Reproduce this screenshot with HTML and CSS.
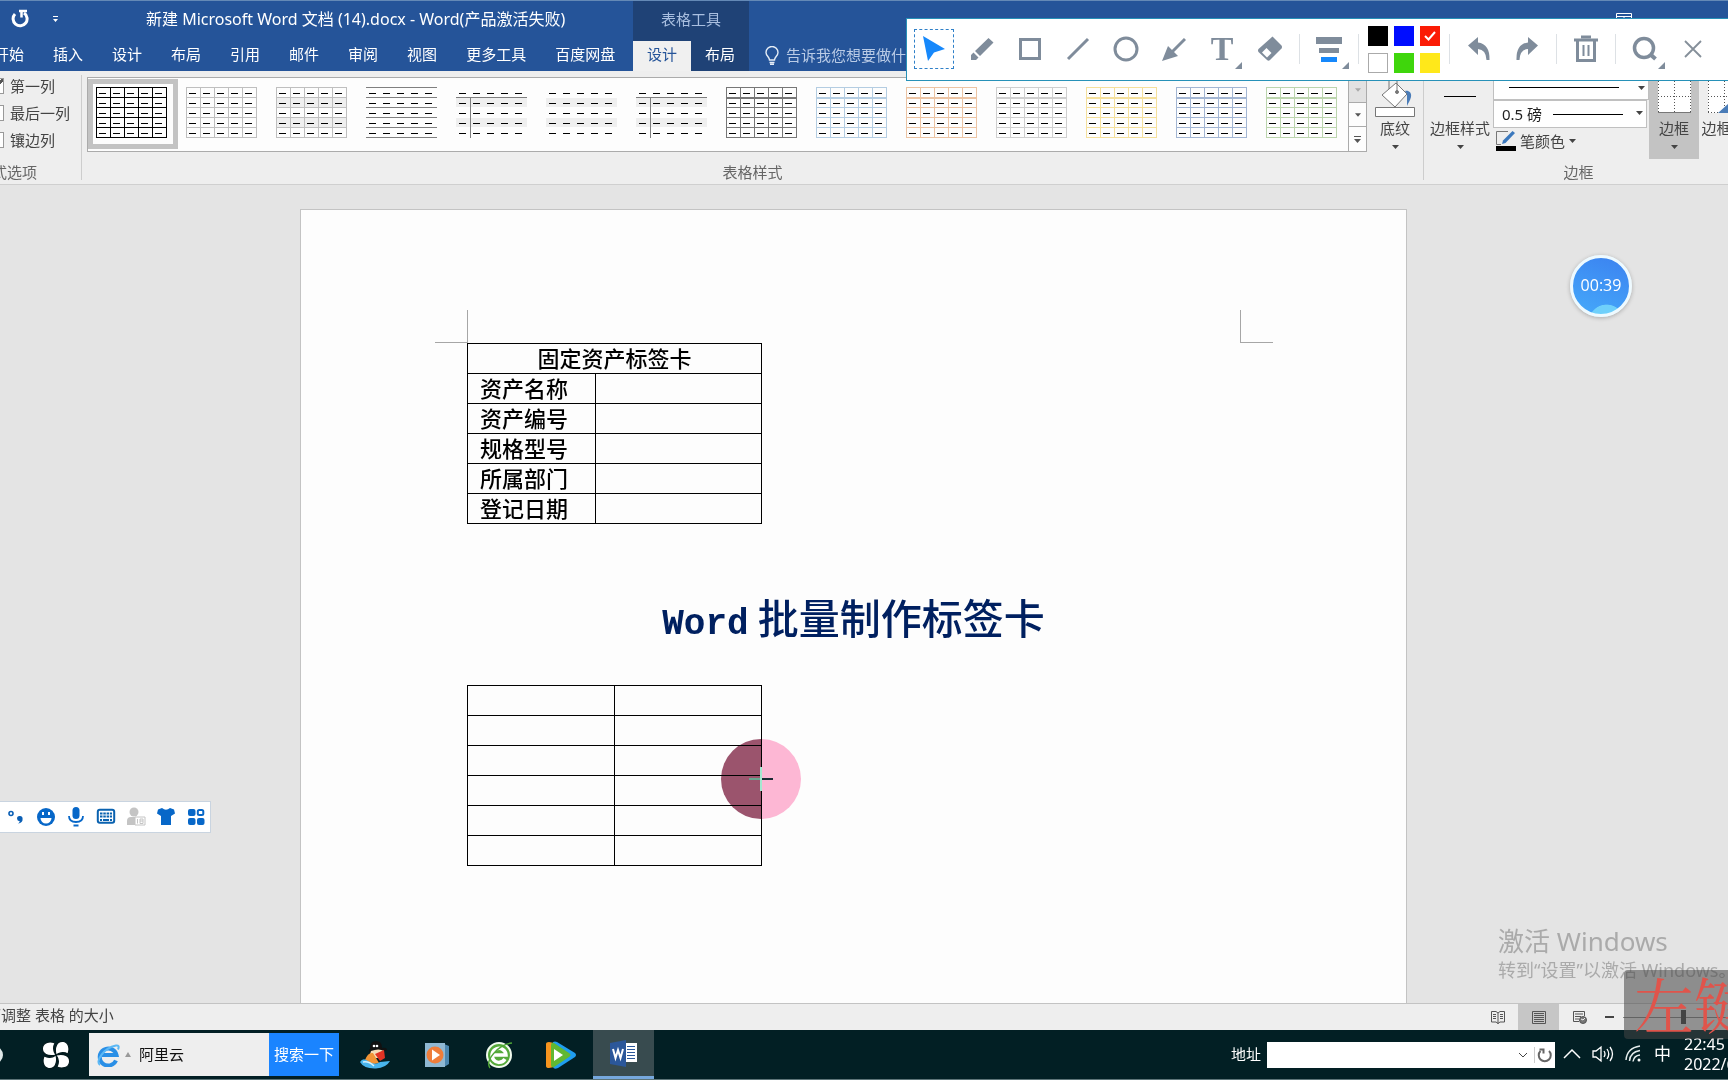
FILE: index.html
```
<!DOCTYPE html>
<html lang="zh-CN">
<head>
    <meta charset="UTF-8">
    <meta name="viewport" content="width=device-width, initial-scale=1.0">
    <title>新建 Microsoft Word 文档 (14).docx - Word</title>
    <link rel="stylesheet" href="styles.css">
</head>
<body>
    <!-- shared shapes -->
    <svg class="defs" aria-hidden="true">
        <symbol id="dashes" viewBox="0 0 71 51">
            <path d="M3 6.5h68M3 16.5h68M3 26.5h68M3 36.5h68M3 46.5h68" stroke="#000" stroke-dasharray="7 7"/>
        </symbol>
        <symbol id="grid" viewBox="0 0 71 51">
            <path d="M0 .5h71M0 10.5h71M0 20.5h71M0 30.5h71M0 40.5h71M0 50.5h71M.5 0v51M14.5 0v51M28.5 0v51M42.5 0v51M56.5 0v51M70.5 0v51" stroke="currentColor" fill="none"/>
            <use href="#dashes"/>
        </symbol>
        <symbol id="grid-head" viewBox="0 0 71 51">
            <use href="#grid"/>
            <path d="M0 11h71" stroke="currentColor" stroke-width="2"/>
        </symbol>
        <symbol id="bands" viewBox="0 0 71 51">
            <path d="M0 11h71v9H0zM0 31h71v9H0z" fill="#efefef"/>
        </symbol>
        <symbol id="arrow" viewBox="0 0 7 4">
            <path d="M0 0h7L3.500 4z" fill="currentColor"/>
        </symbol>
    </svg>

    <header>
        <div class="head-left">
            <div class="titlebar">
                <button class="quick" aria-label="重复">
                    <svg width="18" height="20" viewBox="0 0 18 20" fill="none" stroke="#fff" stroke-width="3"><path d="M4 5a7 7 0 1 0 9-1"/><path d="M8 2h8M10.500 1.500v7" stroke-width="2.500"/></svg>
                </button>
                <button class="quick" aria-label="自定义快速访问工具栏">
                    <svg width="7" height="7" viewBox="0 0 7 7" fill="#fff"><path d="M1 0h5v1H1zM1 3h5L3.500 6z"/></svg>
                </button>
                <span class="title">新建 Microsoft Word 文档 (14).docx - Word(产品激活失败)</span>
            </div>
            <nav class="tabs">
                <a href="#">开始</a>
                <a href="#">插入</a>
                <a href="#">设计</a>
                <a href="#">布局</a>
                <a href="#">引用</a>
                <a href="#">邮件</a>
                <a href="#">审阅</a>
                <a href="#">视图</a>
                <a href="#">更多工具</a>
                <a href="#">百度网盘</a>
            </nav>
        </div>
        <div class="context">
            <span class="context-title">表格工具</span>
            <nav class="context-tabs">
                <a href="#" class="current">设计</a>
                <a href="#">布局</a>
            </nav>
        </div>
        <div class="head-right">
            <svg width="14" height="19" viewBox="0 0 14 19" fill="none" stroke="#e4ecf6" stroke-width="1.400"><path d="M4.500 14c0-3-3.500-4-3.500-7.500a6 6 0 0 1 12 0C13 10 9.500 11 9.500 14zM4.500 16.500h5M5 18.300h4"/></svg>
            <span>告诉我您想要做什</span>
        </div>
        <svg class="ribbon-toggle" width="16" height="12" viewBox="0 0 16 12" fill="none" stroke="#fff"><path d="M.5.5h15v11H.5zM1 3.500h14M8 5v5M5.500 7L8 4.500 10.500 7"/></svg>
    </header>

    <section class="ribbon">
        <div class="group options">
            <div>
                <label><input type="checkbox" checked>第一列</label>
                <label><input type="checkbox">最后一列</label>
                <label><input type="checkbox">镶边列</label>
            </div>
            <p class="group-name">式选项</p>
        </div>

        <div class="group styles">
            <div class="group-body">
                <div class="gallery">
                    <button class="selected" aria-label="网格型"><svg class="thumb black"><use href="#grid"/></svg></button>
                    <button aria-label="网格型浅色"><svg class="thumb gray"><use href="#grid"/></svg></button>
                    <button aria-label="无格式表格 1"><svg class="thumb gray"><use href="#bands"/><use href="#grid"/></svg></button>
                    <button aria-label="无格式表格 2"><svg class="thumb"><path d="M0 .5h71M0 10.500h71M0 20.500h71M0 30.500h71M0 40.500h71M0 50.500h71" stroke="#7f7f7f"/><use href="#dashes"/></svg></button>
                    <button aria-label="无格式表格 3"><svg class="thumb"><use href="#bands"/><path d="M0 10.500h71M14.500 11v40" stroke="#7f7f7f"/><use href="#dashes"/></svg></button>
                    <button aria-label="无格式表格 4"><svg class="thumb"><use href="#bands"/><use href="#dashes"/></svg></button>
                    <button aria-label="无格式表格 5"><svg class="thumb"><use href="#bands"/><path d="M0 10.500h71M14.500 11v40" stroke="#7f7f7f"/><use href="#dashes"/></svg></button>
                    <button aria-label="网格表 1"><svg class="thumb dark"><use href="#grid-head"/></svg></button>
                    <button aria-label="网格表 1 着色 1"><svg class="thumb blue"><use href="#grid-head"/></svg></button>
                    <button aria-label="网格表 1 着色 2"><svg class="thumb orange"><use href="#grid-head"/></svg></button>
                    <button aria-label="网格表 1 着色 3"><svg class="thumb light"><use href="#grid-head"/></svg></button>
                    <button aria-label="网格表 1 着色 4"><svg class="thumb yellow"><use href="#grid-head"/></svg></button>
                    <button aria-label="网格表 1 着色 5"><svg class="thumb steel"><use href="#grid-head"/></svg></button>
                    <button aria-label="网格表 1 着色 6"><svg class="thumb green"><use href="#grid-head"/></svg></button>
                    <div class="scroll">
                        <button aria-label="向上" disabled><svg width="6" height="4"><use href="#arrow"/></svg></button>
                        <button aria-label="向下"><svg width="6" height="4"><use href="#arrow"/></svg></button>
                        <button aria-label="其他"><svg width="7" height="7" viewBox="0 0 7 7" fill="currentColor"><path d="M0 0h7v1H0zM0 3h7L3.500 7z"/></svg></button>
                    </div>
                </div>
                <button class="big">
                    <svg width="40" height="43" viewBox="0 0 40 43" fill="none" stroke="#777"><path d="M.5 32.500h39v9H.5z" fill="#fff"/><path d="M7 20L21 8l11 11-12 13z" fill="#fff"/><path d="M14 14V0M22 18V0"/><circle cx="22" cy="17" r="1.500" fill="#777"/><path d="M30 16c3-1 7 1 6 6-1 4-3 6-4 9V19z" fill="#4a7cb8" stroke="none"/></svg>
                    <span>底纹</span>
                    <svg class="drop" width="7" height="4"><use href="#arrow"/></svg>
                </button>
            </div>
            <p class="group-name">表格样式</p>
        </div>

        <div class="group borders">
            <div class="group-body">
                <button class="big wide">
                    <svg width="32" height="43" viewBox="0 0 32 43"><path d="M0 21.500h32" stroke="#000"/></svg>
                    <span>边框样式</span>
                    <svg class="drop" width="7" height="4"><use href="#arrow"/></svg>
                </button>
                <div class="pen">
                    <label class="pick">
                        <select aria-label="笔样式"><option></option></select>
                        <svg class="stroke long" viewBox="0 0 110 1" preserveAspectRatio="none"><path d="M0 .5h110" stroke="#000"/></svg>
                        <svg class="mark" width="7" height="4"><use href="#arrow"/></svg>
                    </label>
                    <label class="pick">
                        <select aria-label="笔划粗细"><option>0.5 磅</option></select>
                        <svg class="stroke" viewBox="0 0 70 1" preserveAspectRatio="none"><path d="M0 .5h70" stroke="#000"/></svg>
                        <svg class="mark" width="7" height="4"><use href="#arrow"/></svg>
                    </label>
                    <button class="pen-color">
                        <svg width="20" height="20" viewBox="0 0 20 20"><path d="M12 .5H.5v13H5" fill="none" stroke="#777"/><path d="M6 13l1-3.500L16.500 0 19 2 9.500 12z" fill="#3b78bd"/><path d="M0 15h20v5H0z"/></svg>
                        笔颜色
                        <svg width="7" height="4"><use href="#arrow"/></svg>
                    </button>
                </div>
                <button class="big active">
                    <svg width="33" height="43" viewBox="0 0 33 43" fill="none"><path d="M0 0h33v38H0z" fill="#fff"/><path d="M.5 0v37M16.500 0v37M32.500 0v37M0 21.500h33" stroke="#555" stroke-dasharray="1 2"/><path d="M0 37.500h33" stroke="#777"/></svg>
                    <span>边框</span>
                    <svg class="drop" width="7" height="4"><use href="#arrow"/></svg>
                </button>
                <button class="big brush">
                    <svg width="33" height="43" viewBox="0 0 33 43" fill="none"><path d="M0 0h33v38H0z" fill="#fff"/><path d="M.5 0v37M16.500 0v37M32.500 0v37M0 21.500h33M0 37.500h12" stroke="#555" stroke-dasharray="1 2"/><path d="M10 38L20 29l13-3v12z" fill="#4a7cb8"/></svg>
                    <span>边框刷</span>
                </button>
            </div>
            <p class="group-name">边框</p>
        </div>
    </section>

    <main>
        <div class="page">
            <i class="corner left"></i>
            <i class="corner right"></i>
            <table class="card">
                <tr><th colspan="2" class="card-title">固定资产标签卡</th></tr>
                <tr><th>资产名称</th><td></td></tr>
                <tr><th>资产编号</th><td></td></tr>
                <tr><th>规格型号</th><td></td></tr>
                <tr><th>所属部门</th><td></td></tr>
                <tr><th>登记日期</th><td></td></tr>
            </table>
            <h1><span>Word</span> 批量制作标签卡</h1>
            <div class="blank-wrap">
                <table class="blank">
                    <tr><td></td><td></td></tr>
                    <tr><td></td><td></td></tr>
                    <tr><td></td><td></td></tr>
                    <tr><td></td><td></td></tr>
                    <tr><td></td><td></td></tr>
                    <tr><td></td><td></td></tr>
                </table>
                <div class="click-spot"></div>
                <svg class="cross" width="24" height="24" viewBox="0 0 24 24"><path d="M0 12h12" stroke="#68a58f" stroke-width="2"/><path d="M12 12h12" stroke="#1b2a33" stroke-width="2"/><path d="M12 0v24" stroke="#a5e8d0" stroke-width="2"/></svg>
            </div>
        </div>
        <div class="timer">00:39</div>
        <div class="ime">
            <button aria-label="标点"><svg width="20" height="20" viewBox="0 0 20 20" fill="#0b5fb5"><circle cx="5" cy="6.500" r="2" fill="none" stroke="#0b5fb5" stroke-width="1.600"/><path d="M13.500 9a2.600 2.600 0 1 0 .3 5.200c-.2 1-.8 1.600-1.800 2.300 3.200-.2 4.800-2 4.600-4.800A2.800 2.800 0 0 0 13.500 9z"/></svg></button>
            <button aria-label="表情"><svg width="20" height="20" viewBox="0 0 20 20"><circle cx="10" cy="10" r="9" fill="#0767c8"/><path d="M7 5v3M13 5v3" stroke="#fff" stroke-width="2"/><path d="M4.500 11h11a5.500 5.500 0 0 1-11 0z" fill="#fff"/></svg></button>
            <button aria-label="语音"><svg width="20" height="20" viewBox="0 0 20 20" fill="none" stroke="#0767c8"><rect x="6.500" y="0" width="7" height="12" rx="3.500" fill="#0767c8" stroke="none"/><path d="M3 9c0 4 3 6 7 6s7-2 7-6" stroke-width="1.800"/><path d="M7.500 18.500h5" stroke-width="2"/></svg></button>
            <button aria-label="键盘"><svg width="20" height="20" viewBox="0 0 20 20"><rect x="1.800" y="2.800" width="16.400" height="13" rx="2" fill="#fff" stroke="#0a62b0" stroke-width="2"/><path d="M4 6.500h12M4 9.500h12" stroke="#0a62b0" stroke-width="2" stroke-dasharray="2.500 .8"/><path d="M4 13h2M7 13h6M14 13h2" stroke="#0a62b0" stroke-width="2"/></svg></button>
            <button aria-label="用户"><svg width="20" height="20" viewBox="0 0 20 20"><circle cx="8" cy="5" r="4.500" fill="#c4c4c4"/><path d="M1 18v-4q0-4 4-4h6q3 0 4 4v4z" fill="#c4c4c4"/><path d="M9 10h10v8H9z" fill="#fff" stroke="#c4c4c4"/><path d="M11.500 12v4.500M14 12h3v4.500h-3zM14 14h3" stroke="#c4c4c4" fill="none"/></svg></button>
            <button aria-label="皮肤"><svg width="20" height="20" viewBox="0 0 20 20"><path d="M6 1q4 3.500 8 0l4 1.500 1 4-4 2.500v9H5V9L1 6.500l1-4z" fill="#0767c8"/></svg></button>
            <button aria-label="工具"><svg width="20" height="20" viewBox="0 0 20 20" fill="#0767c8"><rect x="2" y="2" width="7.500" height="7" rx="2"/><rect x="11.800" y="3" width="5.500" height="5" rx="1.500" fill="#fff" stroke="#0767c8" stroke-width="2"/><rect x="2" y="11" width="7.500" height="7" rx="2"/><rect x="11" y="11" width="7.500" height="7" rx="2"/></svg></button>
        </div>
        <div class="watermark">
            <p class="big-line">激活 Windows</p>
            <p>转到“设置”以激活 Windows。</p>
        </div>
    </main>

    <footer class="status">
        <span class="hint">可调整 表格 的大小</span>
        <button aria-label="阅读视图"><svg width="14" height="13" viewBox="0 0 14 13" fill="none" stroke="#555"><path d="M7 2L5 .5H.5v10.500H5l2 1.500 2-1.500h4.500V.5H9zM7 2v11M2 3.500h3M2 5.500h3M2 7.500h3M9 3.500h3M9 5.500h3M9 7.500h3"/></svg></button>
        <button class="on" aria-label="页面视图"><svg width="14" height="13" viewBox="0 0 14 13" fill="none" stroke="#555"><path d="M.5.5h13v12H.5zM2 2.500h10M2 4.500h10M2 6.500h10M2 8.500h10M2 10.500h10"/></svg></button>
        <button aria-label="Web 版式"><svg width="14" height="13" viewBox="0 0 14 13" fill="none" stroke="#555"><path d="M6 10.500H.5V.5h11V5M2 3h8M2 5.500h6M2 8h4"/><circle cx="10" cy="9" r="3.500" fill="#777"/><path d="M8 8l2 1 2-2" stroke="#eee"/></svg></button>
        <div class="zoom">
            <button aria-label="缩小"></button>
            <input type="range" min="0" max="100" value="50" aria-label="缩放">
        </div>
    </footer>

    <footer class="taskbar">
        <div class="task-left">
            <svg class="cortana" width="20" height="20" viewBox="0 0 20 20"><circle cx="10" cy="10" r="7.500" fill="none" stroke="#dfe8e8" stroke-width="3"/></svg>
            <svg class="pinwheel" width="28" height="28" viewBox="0 0 28 28"><g fill="#fff" stroke="#04191c" stroke-width="1.200"><path id="petal" d="M14 14C6 16-.5 13 .5 6.500 1.500 1 8 0 13 2 11 6 11 10 14 14z"/><use href="#petal" transform="rotate(90 14 14)"/><use href="#petal" transform="rotate(180 14 14)"/><use href="#petal" transform="rotate(270 14 14)"/></g></svg>
            <form class="search">
                <svg width="24" height="24" viewBox="0 0 24 24" fill="none"><path d="M20 17.500A8.500 8.500 0 1 1 20.500 12H6" stroke="#2a8fe6" stroke-width="4"/><path d="M4 22C-1 19 7 5 20 2.500q4-.5 2 4" stroke="#5bb8f5" stroke-width="2"/></svg>
                <svg width="6" height="5" viewBox="0 0 6 5"><path d="M0 5h6L3 0z" fill="#999"/></svg>
                <input type="text" value="阿里云" aria-label="搜索">
                <button type="button">搜索一下</button>
            </form>
            <button class="app" aria-label="QQ">
                <svg width="32" height="30" viewBox="0 0 32 30"><path d="M11 9q0-8 6-8t6 7q5-1 5 2-3 2-7 1l-7 1q-4 2-4-1 0-2 1-2z" fill="#111"/><circle cx="15" cy="6" r="1.300" fill="#fff"/><circle cx="18" cy="6" r="1.300" fill="#fff"/><path d="M12 11q8-3 13 0v7H10z" fill="#f5dcb6"/><path d="M16 14l9-4 1 8-5 3z" fill="#e23324"/><path d="M6 20q3-8 8-7l6 10-10 2z" fill="#f19436"/><path d="M1 22q3-5 8-1 7 5 12 1l10-1q-4 7-14 7.500Q5 29 1 22z" fill="#48b4ec"/><path d="M4 22q6-1 11 4" stroke="#d4f1ff" stroke-width="1.500" fill="none"/></svg>
            </button>
            <button class="app" aria-label="播放器">
                <svg width="26" height="26" viewBox="0 0 26 26"><path d="M20 2l5 2v18l-5 3z" fill="#4c87b0"/><path d="M1 1h20v24H1z" fill="#8fb8d2"/><circle cx="11" cy="13" r="8.500" fill="#ef7d3a"/><path d="M8 7.500v11l8-5.500z" fill="#fff"/></svg>
            </button>
            <button class="app" aria-label="浏览器">
                <svg width="28" height="28" viewBox="0 0 28 28"><circle cx="14" cy="14" r="12" fill="#55a93a" stroke="#f1faee" stroke-width="2"/><path d="M20 18a7 7 0 1 1 1-4H8" stroke="#fff" stroke-width="3.500" fill="none"/><path d="M5 27C0 20 12 4 27 2" stroke="#4fa636" stroke-width="1.500" fill="none"/></svg>
            </button>
            <button class="app" aria-label="视频">
                <svg width="32" height="28" viewBox="0 0 32 28"><path d="M8 1q2-1 4 0l18 11q2 2 0 4L13 27q-4 2-5-1z" fill="#1f9df0"/><path d="M1 3q0-2 3-2l5 1v24l-5 1q-3 0-3-2z" fill="#f7941e"/><path d="M6 4q0-3 3-2l15 10q3 2 0 4L9 26q-3 1-3-2z" fill="#61b832"/><path d="M9 8v12l9-6z" fill="#fff"/></svg>
            </button>
            <button class="app running" aria-label="Word">
                <svg width="27" height="27" viewBox="0 0 27 27"><path d="M15 3h12v19H15z" fill="#fff"/><path d="M17 6.500h8M17 9.500h8M17 12.500h8M17 15.500h8M17 18.500h8" stroke="#2b579a"/><path d="M0 3l16-3v27L0 24z" fill="#2b579a"/><path d="M3 9l2.500 9L8 10l2.500 8L13 9" stroke="#fff" stroke-width="2" fill="none"/></svg>
            </button>
        </div>
        <div class="tray">
            <label for="addr">地址</label>
            <div class="address">
                <input type="text" id="addr">
                <svg width="10" height="6" viewBox="0 0 10 6"><path d="M1 1l4 4 4-4" fill="none" stroke="#444"/></svg>
                <button aria-label="刷新"><svg width="16" height="16" viewBox="0 0 16 16" fill="none" stroke="#666" stroke-width="2"><path d="M3.500 4A6 6 0 1 0 12 4M2.500 2.500h4v4"/></svg></button>
            </div>
            <svg width="18" height="18" viewBox="0 0 18 18"><path d="M1 13l8-8 8 8" fill="none" stroke="#fff" stroke-width="1.500"/></svg>
            <svg width="22" height="18" viewBox="0 0 22 18" fill="none" stroke="#fff" stroke-width="1.300"><path d="M1 6h3l5-4v14l-5-4H1zM12 6q2 3 0 6M15 4q3.500 5 0 10M18 2q5 7 0 14"/></svg>
            <svg width="18" height="18" viewBox="0 0 18 18" fill="none" stroke="#e4ecec" stroke-width="1.500"><path d="M1 15Q2 3 15 1M4.500 16Q5 7 15 5.500M8 16.500Q9 10.500 15 10"/><circle cx="14" cy="15" r="1.500" fill="#fff" stroke="none"/></svg>
            <span class="lang">中</span>
            <div class="clock">22:45<br>2022/6/11</div>
        </div>
    </footer>

    <div class="key-hint">左键</div>

    <div class="paint">
        <button class="chosen" aria-label="选择"><svg width="24" height="26" viewBox="0 0 24 26"><path d="M1 0l22 13-11 3.500L6 25z" fill="#1688fb"/></svg></button>
        <button aria-label="画笔"><svg width="24" height="24" viewBox="0 0 24 24" fill="#7f8c9b"><path d="M18.500 1l5 4.500L10 19l-5-5zM3.500 15.500l5 5L6 23H1v-5z"/></svg></button>
        <button aria-label="矩形"><svg width="24" height="24" viewBox="0 0 24 24"><path d="M2.500 2.500h19v19h-19z" fill="none" stroke="#7f8c9b" stroke-width="3"/></svg></button>
        <button aria-label="直线"><svg width="24" height="24" viewBox="0 0 24 24"><path d="M2 22L22 2" stroke="#7f8c9b" stroke-width="3"/></svg></button>
        <button aria-label="椭圆"><svg width="26" height="26" viewBox="0 0 26 26"><circle cx="13" cy="13" r="11" fill="none" stroke="#7f8c9b" stroke-width="3"/></svg></button>
        <button aria-label="箭头"><svg width="24" height="24" viewBox="0 0 24 24"><path d="M23 2L10 15" stroke="#7f8c9b" stroke-width="3"/><path d="M0 24L6 9l10 10z" fill="#7f8c9b"/></svg></button>
        <button class="letter more" aria-label="文字">T</button>
        <button aria-label="橡皮擦"><svg width="26" height="26" viewBox="0 0 26 26"><path d="M15.500 0.500l9 9q1 1.500 0 3L13 24q-1.500 1.300-3 0l-8.500-8q-1-1.500 0-3z" fill="#7f8c9b"/><path d="M9.500 12l5 5-4.500 4.500-5-5z" fill="#fff"/></svg></button>
        <i class="sep"></i>
        <button class="more" aria-label="线宽"><svg width="26" height="26" viewBox="0 0 26 26"><path d="M0 1h26v7H0zM3 12h20v5H3z" fill="#7f8c9b"/><path d="M5 21h16v5H5z" fill="#1688fb"/></svg></button>
        <i class="sep"></i>
        <div class="colors">
            <button class="c-black" aria-label="黑"></button>
            <button class="c-blue" aria-label="蓝"></button>
            <button class="c-red" aria-label="红"><svg width="12" height="10" viewBox="0 0 12 10"><path d="M1 5l3.500 3.500L11 1" fill="none" stroke="#fff" stroke-width="2"/></svg></button>
            <button class="c-white" aria-label="白"></button>
            <button class="c-green" aria-label="绿"></button>
            <button class="c-yellow" aria-label="黄"></button>
        </div>
        <i class="sep"></i>
        <button aria-label="撤销"><svg width="22" height="24" viewBox="0 0 22 24"><path d="M0 8.500L10 0v5.500Q22 7 21.500 23h-3Q18 12.500 10 12v6z" fill="#7f8c9b"/></svg></button>
        <button aria-label="重做"><svg width="22" height="24" viewBox="0 0 22 24"><path d="M22 8.500L12 0v5.500Q0 7 .5 23h3Q4 12.500 12 12v6z" fill="#7f8c9b"/></svg></button>
        <i class="sep"></i>
        <button aria-label="删除"><svg width="24" height="28" viewBox="0 0 24 28" fill="none" stroke="#7f8c9b"><path d="M0 5h24" stroke-width="3"/><path d="M7 2h10" stroke-width="3"/><path d="M3.500 6v19.500h17V6" stroke-width="3"/><path d="M9.500 10v11M14.500 10v11" stroke-width="2"/></svg></button>
        <i class="sep"></i>
        <button class="more" aria-label="放大"><svg width="26" height="26" viewBox="0 0 26 26"><circle cx="12" cy="12" r="9.500" fill="none" stroke="#7f8c9b" stroke-width="3.500"/><path d="M18 18l5.500 5" stroke="#7f8c9b" stroke-width="4"/></svg></button>
        <button aria-label="关闭"><svg width="18" height="18" viewBox="0 0 18 18"><path d="M1 1l16 16M17 1L1 17" stroke="#858f99" stroke-width="1.800"/></svg></button>
    </div>
</body>
</html>
```
FILE: styles.css
```
* {
    box-sizing: border-box;
}

body {
    position: relative;
    display: flex;
    flex-direction: column;
    height: 100vh;
    margin: 0;
    overflow: hidden;
    font-family: "Noto Sans", "Noto Sans CJK SC", sans-serif;
    font-size: 15px;
    line-height: 20px;
    color: #444;
    background-color: #e4e4e4;
}

button {
    padding: 0;
    border: none;
    background: none;
    font: inherit;
    color: inherit;
    flex-shrink: 0;
}

a {
    color: inherit;
    text-decoration: none;
}

p {
    margin: 0;
}

svg {
    display: block;
    flex-shrink: 0;
}

.defs {
    position: absolute;
    width: 0;
    height: 0;
}

/* title bar and tabs */
header {
    position: relative;
    display: flex;
    height: 71px;
    flex-shrink: 0;
    background-color: #255499;
    border-top: 1px solid #6489b6;
    color: #fff;
    white-space: nowrap;
}

.head-left {
    width: 633px;
}

.titlebar {
    display: flex;
    align-items: center;
    height: 40px;
    padding: 0 0 4px 11px;
}

.quick {
    display: flex;
    width: 18px;
    margin-right: 23px;
}

.title {
    margin-left: 53px;
    font-size: 16px;
}

.tabs {
    display: flex;
    gap: 29px;
    margin-left: -6px;
    line-height: 26px;
}

.context {
    width: 116px;
    background-color: #1f4276;
}

.context-title {
    display: block;
    height: 40px;
    line-height: 36px;
    text-align: center;
    color: #a9bfe0;
}

.context-tabs {
    display: flex;
    line-height: 26px;
}

.context-tabs a {
    flex: 1;
    height: 30px;
    text-align: center;
}

.context-tabs .current {
    background-color: #f0f0f0;
    color: #255499;
}

.head-right {
    display: flex;
    align-items: center;
    gap: 7px;
    margin: 38px 0 0 16px;
    color: #b9cbe6;
}

.ribbon-toggle {
    position: absolute;
    right: 96px;
    top: 12px;
}

/* ribbon */
.ribbon {
    display: flex;
    height: 114px;
    flex-shrink: 0;
    padding: 4px 0;
    background-color: #eee;
    border-bottom: 1px solid #cfcfcf;
    white-space: nowrap;
    overflow: hidden;
}

.group {
    display: flex;
    flex-direction: column;
    justify-content: space-between;
    flex-shrink: 0;
    border-right: 1px solid #cdcdcd;
}

.group-body {
    display: flex;
}

.group-name {
    line-height: 16px;
    text-align: center;
    color: #666;
}

.options {
    width: 82px;
}

.options label {
    display: flex;
    align-items: center;
    gap: 6px;
    height: 27px;
    margin-left: -12px;
}

.options > div {
    margin-top: -3px;
}

.options input {
    appearance: none;
    width: 16px;
    height: 16px;
    margin: 0;
    flex-shrink: 0;
    border: 1px solid #999;
    background-color: #fff;
}

.options input:checked {
    background-image: linear-gradient(135deg, transparent 45%, #555 45%, #555 58%, transparent 58%);
}

.options .group-name {
    align-self: flex-end;
    margin-right: 44px;
}

.styles {
    width: 1342px;
}

.gallery {
    display: flex;
    height: 75px;
    margin: 2px 5px 0;
    border: 1px solid #ababab;
    background-color: #fdfdfd;
}

.gallery > button {
    display: flex;
    align-items: flex-start;
    width: 90px;
    height: 70px;
    margin-top: 1px;
    padding: 8px 0 0 8px;
}

.gallery > .selected {
    padding: 3px 0 0 3px;
    border: 5px solid #c3c3c3;
}

.thumb {
    width: 71px;
    height: 51px;
}

.thumb use {
    width: 71px;
    height: 51px;
}

.black { color: #000; }
.gray { color: #bfbfbf; }
.dark { color: #777; }
.blue { color: #b4cde2; }
.orange { color: #ecc4a4; }
.light { color: #cfcfcf; }
.yellow { color: #f5e09c; }
.steel { color: #a3b6d3; }
.green { color: #bcd5ae; }

.scroll {
    display: flex;
    flex-direction: column;
    width: 18px;
    border-left: 1px solid #ababab;
}

.scroll button {
    display: flex;
    align-items: center;
    justify-content: center;
    flex: 1;
    border-top: 1px solid #ababab;
    color: #555;
}

.scroll button:disabled {
    border-top: none;
    background-color: #e2e2e2;
    color: #aaa;
}

.big {
    display: flex;
    flex-direction: column;
    align-items: center;
    width: 46px;
    height: 84px;
    color: #444;
}

.big .drop {
    margin-top: 7px;
}

.wide {
    width: 62px;
    margin: 0 2px 0 5px;
}

.active {
    width: 50px;
    background-color: #c3c3c3;
}

.brush {
    width: 48px;
    margin-left: 1px;
}

.borders {
    width: 310px;
}

.pen {
    width: 156px;
    flex-shrink: 0;
}

.pick {
    position: relative;
    display: block;
    height: 25px;
}

.pick + .pick {
    height: 28px;
    margin-right: 2px;
}

.pick select {
    appearance: none;
    width: 100%;
    height: 100%;
    padding: 0 8px;
    border: 1px solid #c0c0c0;
    border-radius: 0;
    background-color: #fff;
    font: inherit;
    color: #222;
}

.stroke {
    position: absolute;
    right: 24px;
    top: 14px;
    width: 70px;
    height: 1px;
}

.long {
    right: 30px;
    top: 12px;
    width: 110px;
}

.mark {
    position: absolute;
    right: 4px;
    top: 11px;
}

.pen-color {
    display: flex;
    align-items: center;
    gap: 4px;
    height: 26px;
    margin-left: 3px;
}

/* document */
main {
    position: relative;
    display: flex;
    justify-content: center;
    flex: 1;
    min-height: 0;
    padding: 24px 21px 0 0;
    overflow: hidden;
}

.page {
    position: relative;
    width: 1107px;
    height: 1560px;
    flex-shrink: 0;
    padding: 133px 166px;
    border: 1px solid #c3c3c3;
    background-color: #fdfdfd;
}

.corner {
    position: absolute;
    top: 100px;
    width: 33px;
    height: 33px;
    border-bottom: 1px solid #a6a6a6;
}

.corner.left {
    left: 134px;
    border-right: 1px solid #a6a6a6;
}

.corner.right {
    right: 133px;
    border-left: 1px solid #a6a6a6;
}

table {
    width: 295px;
    border-collapse: collapse;
    table-layout: fixed;
}

tr {
    height: 30px;
}

th, td {
    padding: 0;
    border: 1px solid #000;
}

.card {
    table-layout: auto;
    color: #000;
    font-family: "Noto Sans CJK SC", sans-serif;
    font-size: 22px;
    line-height: 26px;
}

.card th {
    width: 128px;
    padding: 0 0 3px 12px;
    font-weight: 500;
    text-align: left;
}

.card .card-title {
    width: auto;
    padding-left: 0;
    text-align: center;
}

h1 {
    height: 60px;
    margin: 62px 0 39px;
    color: #002060;
    font-family: "Noto Sans CJK SC", sans-serif;
    font-size: 41px;
    font-weight: 500;
    line-height: 60px;
    text-align: center;
}

h1 span {
    font-family: "Liberation Mono", monospace;
    font-size: 36px;
    font-weight: bold;
}

.blank-wrap {
    position: relative;
    width: 295px;
}

.click-spot {
    position: absolute;
    left: 254px;
    top: 54px;
    width: 80px;
    height: 80px;
    border-radius: 50%;
    background: linear-gradient(to right, #9c546e 50%, #ffb9d6 50%);
    mix-blend-mode: multiply;
}

.cross {
    position: absolute;
    left: 282px;
    top: 82px;
}

.timer {
    position: absolute;
    right: 96px;
    top: 70px;
    width: 62px;
    height: 62px;
    border: 3px solid #eefaff;
    border-radius: 50%;
    background: radial-gradient(circle at 60% 115%, #6fd0fb 24%, transparent 25%), linear-gradient(200deg, #3b82f0, #45a9fa);
    box-shadow: 0 1px 4px rgba(0, 0, 0, 0.25);
    color: #fff;
    font-family: "Open Sans", sans-serif;
    font-size: 16px;
    line-height: 54px;
    text-align: center;
}

.ime {
    position: absolute;
    left: 0;
    top: 616px;
    display: flex;
    align-items: center;
    gap: 10px;
    height: 32px;
    padding: 0 4px 0 6px;
    border: 1px solid #c9d4e0;
    border-left: none;
    background-color: #fff;
}

.watermark {
    position: absolute;
    right: 2px;
    bottom: 21px;
    width: 228px;
    color: #aaa;
    font-size: 18px;
    line-height: 24px;
    white-space: nowrap;
}

.watermark .big-line {
    font-size: 26px;
    line-height: 34px;
}

/* status bar */
.status {
    display: flex;
    height: 27px;
    flex-shrink: 0;
    background-color: #eee;
    border-top: 1px solid #c3c3c3;
}

.hint {
    flex: 1;
    margin-left: -14px;
    line-height: 23px;
}

.status > button {
    display: flex;
    align-items: center;
    justify-content: center;
    width: 41px;
}

.status .on {
    background-color: #c6c6c6;
}

.zoom {
    display: flex;
    align-items: center;
    gap: 9px;
    width: 128px;
    padding-left: 5px;
}

.zoom button {
    width: 9px;
    height: 2px;
    background-color: #444;
}

.zoom input {
    appearance: none;
    width: 120px;
    height: 1px;
    margin: 0;
    flex-shrink: 0;
    background-color: #888;
}

.zoom input::-webkit-slider-thumb {
    appearance: none;
    width: 5px;
    height: 14px;
    background-color: #444;
}

/* taskbar */
.taskbar {
    display: flex;
    justify-content: space-between;
    height: 50px;
    flex-shrink: 0;
    background-color: #021f24;
    border-bottom: 1px solid #5d7478;
    color: #fff;
}

.task-left,
.tray {
    display: flex;
    align-items: center;
}

.cortana {
    margin-left: -16px;
}

.pinwheel {
    margin: 0 19px 0 38px;
}

.search {
    display: flex;
    align-items: center;
    gap: 5px;
    width: 250px;
    height: 43px;
    margin-right: 5px;
    padding-left: 7px;
    background-color: #eee;
}

.search input {
    flex: 1;
    min-width: 0;
    height: 100%;
    padding: 0 0 2px 3px;
    border: none;
    background: none;
    font: inherit;
    color: #111;
}

.search button {
    width: 70px;
    height: 43px;
    padding-bottom: 2px;
    background-color: #1a84ff;
    color: #fff;
}

.app {
    display: flex;
    align-items: center;
    justify-content: center;
    width: 62px;
    height: 49px;
}

.running {
    width: 61px;
    margin-left: 1px;
    background-color: #384b4f;
    border-bottom: 3px solid #76a8dd;
}

.tray {
    gap: 8px;
    padding-bottom: 2px;
    white-space: nowrap;
}

.address {
    display: flex;
    align-items: center;
    width: 288px;
    height: 26px;
    margin: 2px 0 0 -2px;
    background-color: #fff;
}

.address input {
    flex: 1;
    min-width: 0;
    border: none;
    background: none;
}

.address button {
    display: flex;
    justify-content: center;
    width: 21px;
    margin-left: 6px;
    border-left: 1px solid #ccc;
}

.tray > svg {
    margin-right: 3px;
}

.lang {
    font-size: 17px;
}

.clock {
    width: 44px;
    margin-left: 5px;
    font-size: 16px;
    line-height: 20px;
    overflow: hidden;
}

/* overlays */
.key-hint {
    position: absolute;
    right: 0;
    bottom: 41px;
    width: 104px;
    height: 69px;
    padding-left: 10px;
    overflow: hidden;
    border-radius: 4px 0 0 4px;
    background-color: rgba(70, 70, 70, 0.55);
    color: #e0544b;
    font-family: "Noto Serif CJK SC", "Noto Sans CJK SC", serif;
    font-size: 60px;
    line-height: 66px;
    white-space: nowrap;
}

.paint {
    position: absolute;
    left: 906px;
    right: 0;
    top: 18px;
    display: flex;
    gap: 8px;
    height: 63px;
    padding: 10px 0 0 7px;
    overflow: hidden;
    border: 1px solid #2791b8;
    border-right: none;
    background-color: #fff;
}

.paint > button {
    position: relative;
    display: flex;
    align-items: center;
    justify-content: center;
    width: 40px;
    height: 40px;
}

.paint > .chosen {
    border: 1px dashed #2f80c8;
}

.more::after {
    content: "";
    position: absolute;
    right: 0;
    bottom: 0;
    border-left: 7px solid transparent;
    border-bottom: 7px solid #7f8c9b;
}

.paint .letter {
    color: #7f8c9b;
    font-family: "Liberation Serif", serif;
    font-size: 34px;
    font-weight: bold;
}

.sep {
    width: 1px;
    height: 30px;
    margin: 5px 1px 0;
    flex-shrink: 0;
    background-color: #dde1e5;
}

.colors {
    display: grid;
    grid-template-columns: repeat(3, 20px);
    grid-auto-rows: 20px;
    align-content: start;
    gap: 7px 6px;
    margin-top: -3px;
}

.colors button {
    display: flex;
    align-items: center;
    justify-content: center;
}

.c-black { background-color: #000; }
.c-blue { background-color: #000dff; }
.c-red { background-color: #fb1b05; }
.colors .c-white { border: 1px solid #aaa; }
.c-green { background-color: #3fd60c; }
.c-yellow { background-color: #ffe81a; }
```
